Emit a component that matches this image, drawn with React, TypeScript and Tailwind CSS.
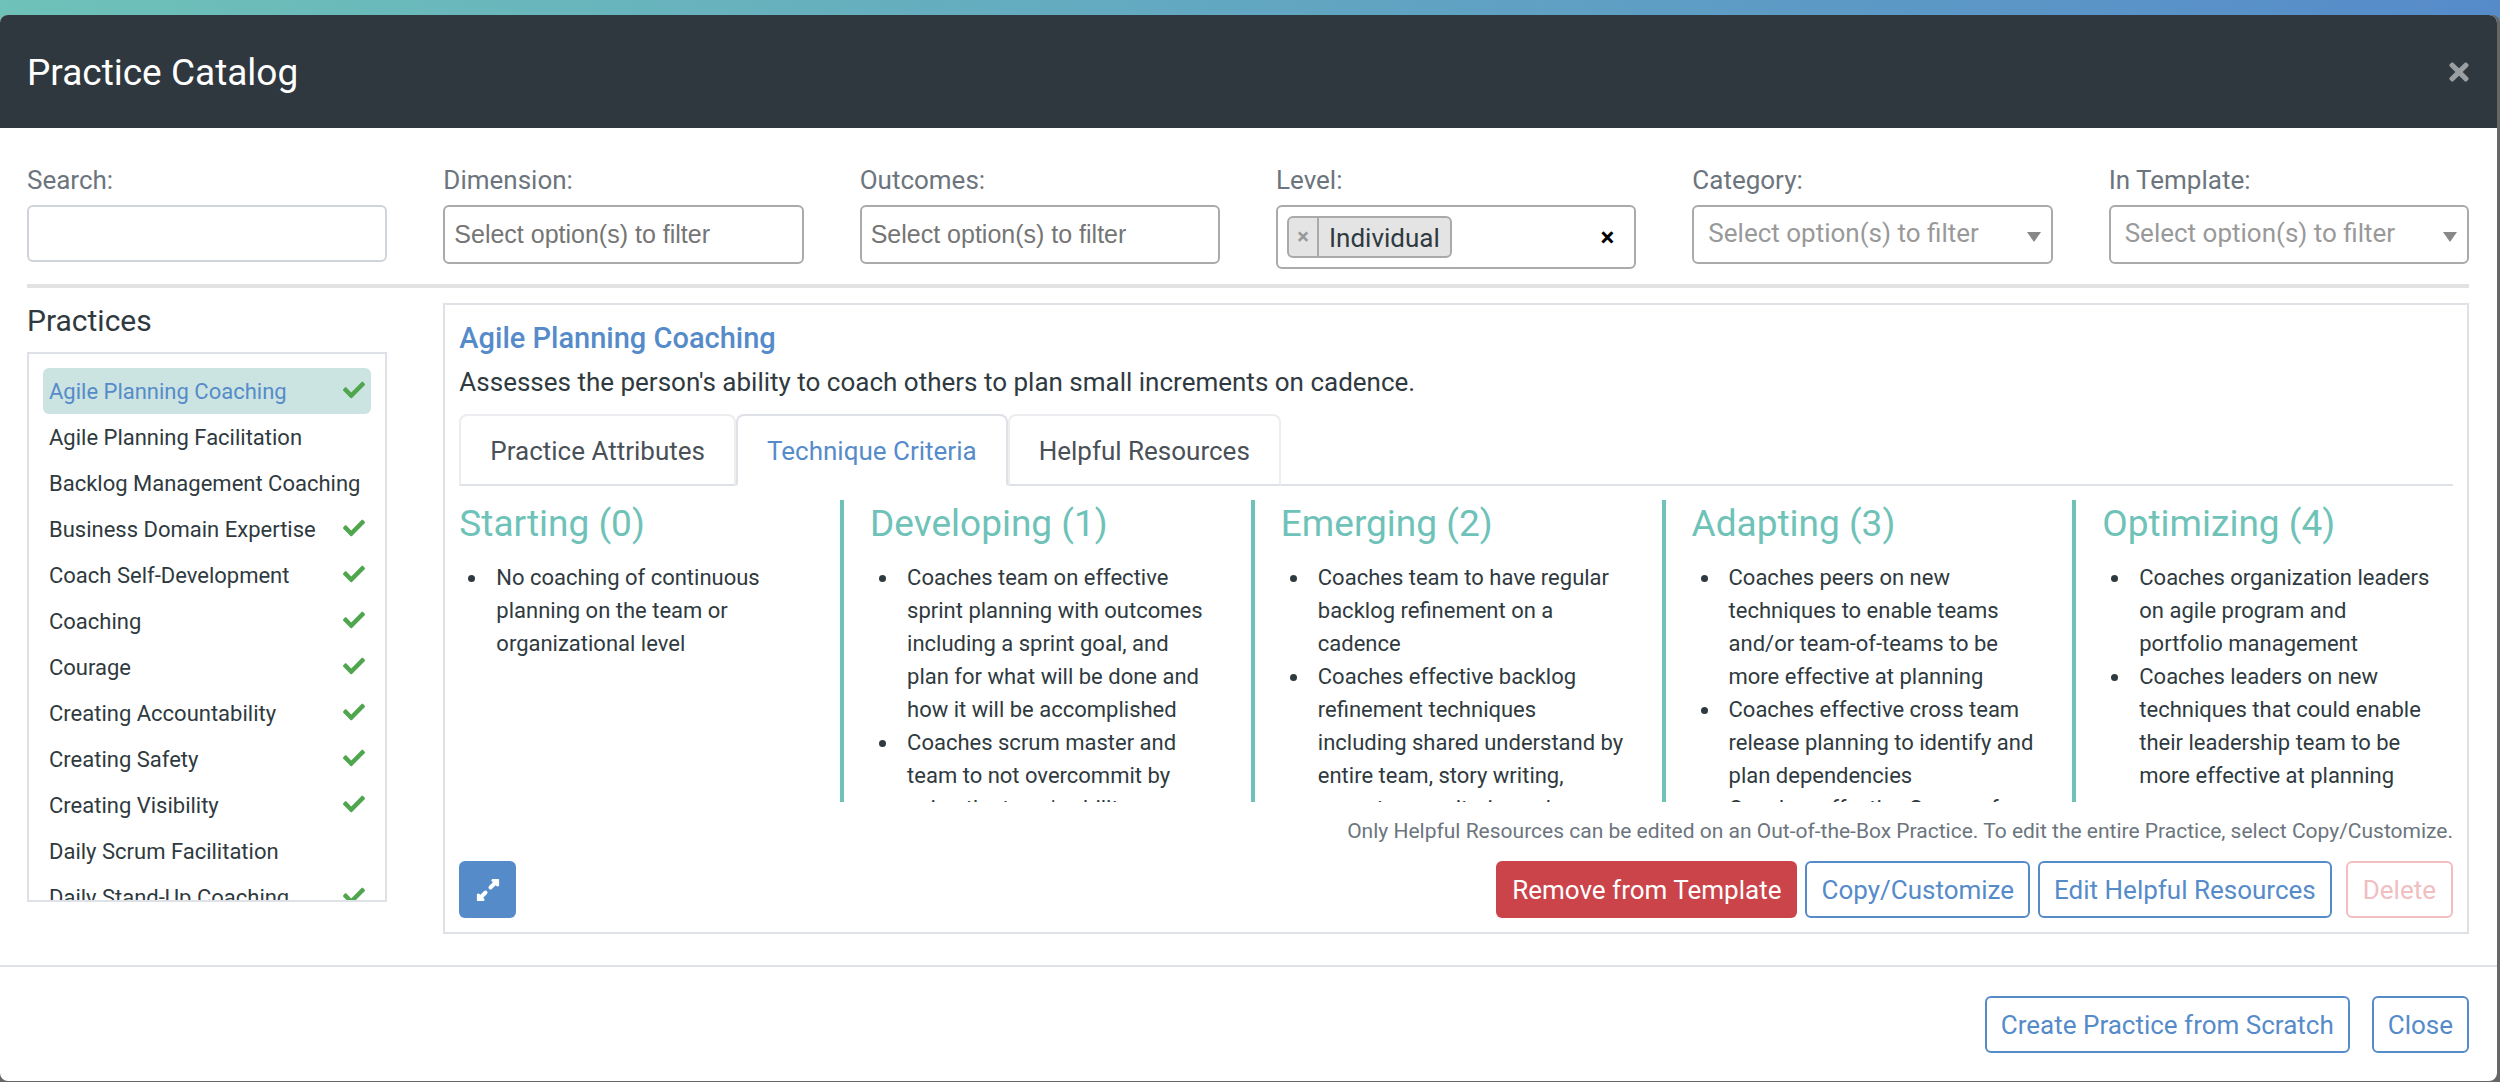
import { useState } from "react";
import { FaCheck, FaTimes } from "react-icons/fa";

const practices = [
    { name: "Agile Planning Coaching", inTemplate: true },
    { name: "Agile Planning Facilitation", inTemplate: false },
    { name: "Backlog Management Coaching", inTemplate: false },
    { name: "Business Domain Expertise", inTemplate: true },
    { name: "Coach Self-Development", inTemplate: true },
    { name: "Coaching", inTemplate: true },
    { name: "Courage", inTemplate: true },
    { name: "Creating Accountability", inTemplate: true },
    { name: "Creating Safety", inTemplate: true },
    { name: "Creating Visibility", inTemplate: true },
    { name: "Daily Scrum Facilitation", inTemplate: false },
    { name: "Daily Stand-Up Coaching", inTemplate: true },
]

const tabs = ["Practice Attributes", "Technique Criteria", "Helpful Resources"]

// \u00a0 keeps short word pairs on one line
const criteria = [
    {
        title: "Starting (0)",
        items: ["No coaching of continuous planning on the team or organizational level"],
    },
    {
        title: "Developing (1)",
        items: [
            "Coaches team on effective sprint planning with outcomes including a sprint goal, and plan\u00a0for what will be done and how it will be accomplished",
            "Coaches scrum master and team to not overcommit by using the team's ability",
        ],
    },
    {
        title: "Emerging (2)",
        items: [
            "Coaches team to have regular backlog refinement on a cadence",
            "Coaches effective backlog refinement techniques including shared understand by entire team, story writing, acceptance criteria, and",
        ],
    },
    {
        title: "Adapting (3)",
        items: [
            "Coaches peers on new techniques to enable teams and/or team-of-teams to be more effective at planning",
            "Coaches effective cross team release planning to identify and plan dependencies",
            "Coaches effective Scrum of",
        ],
    },
    {
        title: "Optimizing (4)",
        items: [
            "Coaches organization leaders on agile program and portfolio\u00a0management",
            "Coaches leaders on new techniques that could enable their leadership team to be more effective at planning",
        ],
    },
]

const label = "block mb-[5px] text-[26px] leading-[40px] text-[#6c757d]"
const field = "block w-full h-[59px] rounded-[6px] border-2 border-[#aaaaaa] bg-white"
const outlineBtn = "h-[57px] pt-[2px] px-[14px] rounded-[6px] border-2 border-[#568bca] text-[26px] text-[#568bca] bg-white"

function SelectField({ id, title }: { id: string, title: string }) {
    return (
        <div>
            <label htmlFor={id} className={label}>{title}</label>
            <div className="relative">
                <select id={id} className={field + " appearance-none px-[14px] pb-[2px] text-[26px] text-[#999999]"}>
                    <option>Select option(s) to filter</option>
                </select>
                <svg className="absolute right-3 top-[27px] w-[14px] h-[10px] pointer-events-none" viewBox="0 0 14 10">
                    <path d="M0 0h14L7 10z" fill="#888888" />
                </svg>
            </div>
        </div>
    )
}

function ExpandIcon() {
    return (
        <svg width="24" height="24" viewBox="0 0 24 24" fill="none" stroke="white" strokeWidth="4" strokeLinecap="round">
            <path d="M14.5 9.5L19 5M9.5 14.5L5 19" />
            <path d="M16 1h6.5a.6.6 0 0 1 .6.6V8l-2 .6-5.8-5.8zM8 23H1.5a.6.6 0 0 1-.6-.6V16l2-.6 5.8 5.8z" fill="white" stroke="none" />
        </svg>
    )
}

export default function App() {

    const [selected, setSelected] = useState("Agile Planning Coaching")
    const [tab, setTab] = useState("Technique Criteria")
    const [search, setSearch] = useState("")

    return (
        <div className="min-h-screen bg-[linear-gradient(to_right,#6ec2b8,#568bca)] pt-[15px] font-['Roboto',sans-serif] text-[#2f3a40]">
            <div className="bg-[#666666] pr-[3px] pb-[2px] rounded-t-[8px]">
                <div className="bg-white rounded-[8px] overflow-hidden">
                    <header className="h-[113px] pl-[27px] pr-7 flex justify-between items-center bg-[#2f383e]">
                        <h1 className="pt-[2px] text-[37px] text-white">Practice Catalog</h1>
                        <button aria-label="Close dialog" className="text-[#9b9fa2]"><FaTimes className="w-5 h-7" /></button>
                    </header>

                    <main className="pl-[27px] pr-7 pt-8 pb-[31px]">
                        <div className="grid grid-cols-6 gap-14 items-start">
                            <div>
                                <label htmlFor="search" className={label}>Search:</label>
                                <input id="search" value={search} onChange={(e) => setSearch(e.target.value)} className="block w-full h-[57px] px-3 rounded-[6px] border-2 border-[#ced4da] text-[26px]" />
                            </div>
                            <div>
                                <label htmlFor="dimension" className={label}>Dimension:</label>
                                <input id="dimension" placeholder="Select option(s) to filter" className={field + " px-[9px] font-['Liberation_Sans',sans-serif] text-[25px] placeholder:text-[#757575]"} />
                            </div>
                            <div>
                                <label htmlFor="outcomes" className={label}>Outcomes:</label>
                                <input id="outcomes" placeholder="Select option(s) to filter" className={field + " px-[9px] font-['Liberation_Sans',sans-serif] text-[25px] placeholder:text-[#757575]"} />
                            </div>
                            <div>
                                <label htmlFor="level" className={label}>Level:</label>
                                <div className="flex items-center h-[64px] pl-[9px] pr-5 rounded-[6px] border-2 border-[#aaaaaa]">
                                    <div className="flex items-center h-[42px] rounded-[6px] border-2 border-[#aaaaaa] bg-[#e4e4e4]">
                                        <button aria-label="Remove Individual" className="w-[30px] h-full border-r-2 border-[#aaaaaa] text-[22px] leading-none font-bold text-[#999999]">×</button>
                                        <span className="px-[10px] pt-[2px] text-[26px]">Individual</span>
                                    </div>
                                    <input id="level" className="flex-1 min-w-0 h-full px-2 text-[26px] outline-none" />
                                    <button aria-label="Clear level" className="text-[26px] leading-none font-bold text-black">×</button>
                                </div>
                            </div>
                            <SelectField id="category" title="Category:" />
                            <SelectField id="template" title="In Template:" />
                        </div>

                        <hr className="my-[15px] border-t-4 border-[#e2e2e2]" />

                        <div className="grid grid-cols-6 gap-14 items-start">
                            <section>
                                <h2 className="mb-[13px] text-[30px] leading-9">Practices</h2>
                                <ul className="h-[550px] overflow-hidden p-[14px] border-2 border-[#dee2e6]">
                                    {practices.map((item) => (
                                        <li key={item.name}>
                                            <button
                                                onClick={() => setSelected(item.name)}
                                                className={`w-full h-[46px] px-[6px] flex items-center justify-between rounded-[6px] text-[22px] whitespace-nowrap ${selected === item.name ? "bg-[#cbe4e1] text-[#568bca]" : ""}`}
                                            >
                                                {item.name}
                                                {item.inTemplate && <FaCheck size={22} className="mb-[3px] text-[#4fa64f]" />}
                                            </button>
                                        </li>
                                    ))}
                                </ul>
                            </section>

                            <section className="col-span-5 min-w-0 px-[14px] pt-[15px] pb-[14px] border-2 border-[#dee2e6]">
                                <h2 className="text-[29px] leading-9 font-medium text-[#568bca]">{selected}</h2>
                                <p className="mt-2 text-[26px] leading-9">Assesses the person's ability to coach others to plan small increments on cadence.</p>

                                <div role="tablist" className="mt-[14px] flex border-b-2 border-[#dee2e6]">
                                    {tabs.map((name) => (
                                        <button
                                            key={name}
                                            role="tab"
                                            aria-selected={tab === name}
                                            onClick={() => setTab(name)}
                                            className={`h-[72px] -mb-[2px] pt-[2px] px-[29px] rounded-t-[8px] border-2 text-[26px] ${tab === name ? "border-[#dee2e6] border-b-white text-[#568bca]" : "border-[#ebedf0] border-b-[#dee2e6] text-[#495057]"}`}
                                        >
                                            {name}
                                        </button>
                                    ))}
                                </div>

                                <div className="mt-[14px] -mx-[30px] h-[302px] overflow-hidden grid grid-cols-5">
                                    {criteria.map((col, i) => (
                                        <div key={col.title} className={`min-w-0 pl-[26px] pr-[35px] border-l-4 ${i === 0 ? "border-transparent" : "border-[#6ec2b8]"}`}>
                                            <h3 className="mb-[13px] text-[37px] leading-[48px] text-[#6ec2b8]">{col.title}</h3>
                                            <ul className="pl-[29px] list-disc text-[22px] leading-[33px]">
                                                {col.items.map((text) => <li key={text} className="pl-2">{text}</li>)}
                                            </ul>
                                        </div>
                                    ))}
                                </div>

                                <p className="mt-[14px] text-right text-[21px] leading-[30px] text-[#6c757d]">Only Helpful Resources can be edited on an Out-of-the-Box Practice. To edit the entire Practice, select Copy/Customize.</p>

                                <div className="mt-[15px] flex items-center gap-2">
                                    <button aria-label="Expand" className="w-[57px] h-[57px] mr-auto flex items-center justify-center rounded-[6px] bg-[#568bca]"><ExpandIcon /></button>
                                    <button className="h-[57px] pt-[2px] px-4 rounded-[6px] bg-[#cb444a] text-[26px] text-white">Remove from Template</button>
                                    <button className={outlineBtn}>Copy/Customize</button>
                                    <button className={outlineBtn}>Edit Helpful Resources</button>
                                    <button disabled className="h-[57px] pt-[2px] ml-[6px] px-[15px] rounded-[6px] border-2 border-[#f1bec1] text-[26px] text-[#f1bec1]">Delete</button>
                                </div>
                            </section>
                        </div>
                    </main>

                    <footer className="pl-[27px] pr-7 pt-[29px] pb-7 flex justify-end gap-[22px] border-t-2 border-[#dee2e6]">
                        <button className={outlineBtn}>Create Practice from Scratch</button>
                        <button className={outlineBtn}>Close</button>
                    </footer>
                </div>
            </div>
        </div>
    )
}
